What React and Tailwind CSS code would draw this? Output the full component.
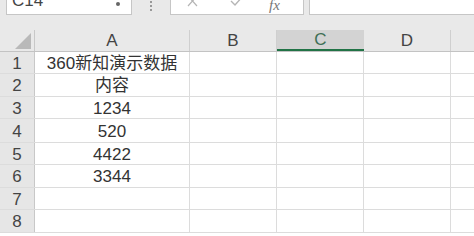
import React from "react";

const font = { fontFamily: '"Liberation Sans", "Noto Sans CJK SC", sans-serif' };

const rows = [
  { n: "1", a: "360新知演示数据", h: "h-[22px]" },
  { n: "2", a: "内容", h: "h-[23px]" },
  { n: "3", a: "1234", h: "h-[22px]" },
  { n: "4", a: "520", h: "h-[24px]" },
  { n: "5", a: "4422", h: "h-[22px]" },
  { n: "6", a: "3344", h: "h-[23px]" },
  { n: "7", a: "", h: "h-[22px]" },
  { n: "8", a: "", h: "h-[23px]" },
];

function Row({ r }) {
  return (
    <div className={`flex ${r.h} border-b border-[#dcdcdc]`}>
      <div className="w-[35px] shrink-0 bg-[#e6e6e6] border-r border-[#c8c8c8] flex items-center justify-center pt-[2px] text-[17px] text-[#444]">
        {r.n}
      </div>
      <div className="w-[155px] shrink-0 border-r border-[#dcdcdc] flex items-center justify-center pt-[2px] text-[17px] text-[#333]">
        {r.a}
      </div>
      <div className="w-[87px] shrink-0 border-r border-[#dcdcdc]" />
      <div className="w-[87px] shrink-0 border-r border-[#dcdcdc]" />
      <div className="w-[87px] shrink-0 border-r border-[#dcdcdc]" />
      <div className="flex-1" />
    </div>
  );
}

export default function App() {
  return (
    <div className="w-[474px] h-[236px] overflow-hidden bg-white" style={font}>
      {/* formula bar */}
      <div className="h-[17px] bg-[#e9e9e9] flex items-start">
        <div className="ml-[6px] w-[126px] h-[15px] bg-white border border-t-0 border-[#c6c6c6] overflow-hidden relative">
          <div className="ml-[5px] mt-[-8px] text-[17px] leading-[18px] text-[#444]">C14</div>
          <div className="absolute right-[11px] top-[2px] w-[4px] h-[4px] rounded-full bg-[#666]" />
        </div>
        <div className="w-[38px] h-[15px] flex justify-center">
          <div className="flex flex-col items-center gap-[2px] mt-[1px]">
            <div className="w-[2px] h-[2px] bg-[#999]" />
            <div className="w-[2px] h-[2px] bg-[#999]" />
            <div className="w-[2px] h-[2px] bg-[#999]" />
          </div>
        </div>
        <div className="w-[134px] h-[15px] bg-white border border-t-0 border-[#c6c6c6] flex items-start overflow-hidden">
          <svg width="20" height="10" viewBox="0 0 20 10" className="ml-[14px]">
            <path d="M3 -4 L12 6 M12 -4 L3 6" stroke="#b5b5b5" strokeWidth="1.2" fill="none" />
          </svg>
          <svg width="20" height="10" viewBox="0 0 20 10" className="ml-[24px]">
            <path d="M2 1 L6 5 L14 -4" stroke="#b5b5b5" strokeWidth="1.4" fill="none" />
          </svg>
          <div
            className="ml-[20px] mt-[-6px] text-[15px] italic text-[#777]"
            style={{ fontFamily: '"Liberation Serif", serif' }}
          >
            fx
          </div>
        </div>
        <div className="w-[5px]" />
        <div className="flex-1 h-[15px] bg-white border border-t-0 border-r-0 border-[#c6c6c6]" />
      </div>
      <div className="h-[13px] bg-[#e9e9e9]" />
      {/* column headers */}
      <div className="flex h-[22px] bg-[#e9e9e9] border-b border-[#c3c3c3]">
        <div className="w-[35px] shrink-0 border-r border-[#c8c8c8] relative">
          <svg width="16" height="16" viewBox="0 0 16 16" className="absolute right-[3px] bottom-[2px]">
            <path d="M16 0 L16 16 L0 16 Z" fill="#b9b9b9" />
          </svg>
        </div>
        <div className="w-[155px] shrink-0 border-r border-[#cfcfcf] flex items-center justify-center pt-[1px] text-[17px] text-[#444]">
          A
        </div>
        <div className="w-[87px] shrink-0 border-r border-[#cfcfcf] flex items-center justify-center pt-[1px] text-[17px] text-[#444]">
          B
        </div>
        <div className="w-[87px] shrink-0 bg-[#d3d3d3] border-b-2 border-[#217346] flex items-center justify-center pt-[1px] text-[17px] text-[#3f6f55]">
          C
        </div>
        <div className="w-[87px] shrink-0 border-r border-[#cfcfcf] flex items-center justify-center pt-[1px] text-[17px] text-[#444]">
          D
        </div>
        <div className="flex-1" />
      </div>
      {rows.map((r) => (
        <Row key={r.n} r={r} />
      ))}
    </div>
  );
}
